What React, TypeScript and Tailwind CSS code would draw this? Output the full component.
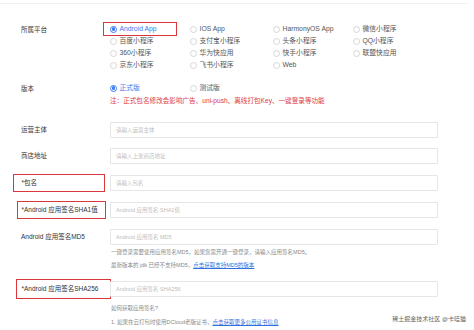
import React from "react";

const FONT = { fontFamily: '"Liberation Sans", "Noto Sans CJK SC", sans-serif' };

function Radio({ checked }: { checked?: boolean }) {
  return checked ? (
    <span className="w-[7px] h-[7px] rounded-full border border-[#3a7bf0] flex items-center justify-center shrink-0 bg-white">
      <span className="w-[3.5px] h-[3.5px] rounded-full bg-[#3a7bf0]" />
    </span>
  ) : (
    <span className="w-[7px] h-[7px] rounded-full border border-[#d6d6d6] shrink-0 bg-white" />
  );
}

function Option({ label, checked, boxed }: { label: string; checked?: boolean; boxed?: boolean }) {
  return (
    <div className="relative flex items-center gap-[2.5px] h-[12px]">
      <Radio checked={checked} />
      <span className={checked ? "text-[#3a7bf0] text-[6.8px] leading-[12px]" : "text-[#555] text-[6.8px] leading-[12px]"}>
        {label}
      </span>
      {boxed && (
        <span className="absolute left-[-7px] top-[-1px] w-[74px] h-[14px] border-[1.5px] border-[#d9363e]" />
      )}
    </div>
  );
}

function Input({ placeholder }: { placeholder: string }) {
  return (
    <div className="w-[328px] h-[16px] border border-[#e6e6e6] rounded-[1px] flex items-center pl-[5px] bg-white">
      <span className="text-[5.5px] text-[#bdbdbd]">{placeholder}</span>
    </div>
  );
}

function Label({ children }: { children: React.ReactNode }) {
  return (
    <div className="w-[110px] shrink-0 pl-[21px] text-[6.5px] text-[#333]">{children}</div>
  );
}

export default function App() {
  const rows = [
    ["Android App", "IOS App", "HarmonyOS App", "微信小程序"],
    ["百度小程序", "支付宝小程序", "头条小程序", "QQ小程序"],
    ["360小程序", "华为快应用", "快手小程序", "联盟快应用"],
    ["京东小程序", "飞书小程序", "Web", ""],
  ];
  return (
    <div className="relative w-[474px] h-[330px] bg-white overflow-hidden" style={FONT}>
      <div className="h-[4px] w-[468px] border-b border-[#f0f0f0]" />

      {/* 所属平台 */}
      <div className="flex items-start mt-[19px]">
        <div className="w-[110px] shrink-0 pl-[21px] text-[6.5px] text-[#333] leading-[14px]">所属平台</div>
        <div className="grid grid-cols-[80px_83px_80px_80px]">
          {rows.map((r, ri) =>
            r.map((o, ci) =>
              o ? (
                <Option key={`${ri}-${ci}`} label={o} checked={ri === 0 && ci === 0} boxed={ri === 0 && ci === 0} />
              ) : (
                <div key={`${ri}-${ci}`} />
              )
            )
          )}
        </div>
      </div>

      {/* 版本 */}
      <div className="flex items-start mt-[11px]">
        <div className="w-[110px] shrink-0 pl-[21px] text-[6.5px] text-[#333] leading-[14px]">版本</div>
        <div className="flex flex-col">
          <div className="grid grid-cols-[80px_83px]">
            <Option label="正式版" checked />
            <Option label="测试版" />
          </div>
          <div className="mt-[1px] text-[6.6px] leading-[12px] text-[#e0393e]">
            注：正式包名修改会影响广告、uni-push、离线打包Key、一键登录等功能
          </div>
        </div>
      </div>

      {/* 运营主体 */}
      <div className="flex items-center mt-[15px]">
        <Label>运营主体</Label>
        <Input placeholder="请输入运营主体" />
      </div>

      <div className="flex items-center mt-[10px]">
        <Label>商店地址</Label>
        <Input placeholder="请输入上架商店地址" />
      </div>

      <div className="flex items-center mt-[10px]">
        <div className="w-[110px] shrink-0 pl-[13px]">
          <div className="w-[92px] h-[18px] border-[1.5px] border-[#d9363e] flex items-center pl-[7.5px] text-[6.5px] text-[#333]">
            *包名
          </div>
        </div>
        <Input placeholder="请输入包名" />
      </div>

      <div className="flex items-center mt-[9px]">
        <div className="w-[110px] shrink-0 pl-[17px]">
          <div className="w-[89px] h-[18px] border-[1.5px] border-[#d9363e] flex items-center pl-[3.5px] text-[6.5px] text-[#333] whitespace-nowrap">
            *Android 应用签名SHA1值
          </div>
        </div>
        <Input placeholder="Android 应用签名 SHA1值" />
      </div>

      <div className="flex items-center mt-[10px]">
        <Label>Android 应用签名MD5</Label>
        <Input placeholder="Android 应用签名 MD5" />
      </div>

      <div className="pl-[111px] text-[5.5px] text-[#888] leading-[13px] mt-[1px]">
        <div>一键登录需要使用应用签名MD5，如果您需开通一键登录，请输入应用签名MD5。</div>
        <div>
          最新版本的 jdk 已经不支持MD5，
          <span className="text-[#2f6fde] underline">点击获取支持MD5的版本</span>
        </div>
      </div>

      <div className="flex items-center mt-[7px]">
        <div className="w-[110px] shrink-0 pl-[16px]">
          <div className="w-[95px] h-[20px] border-[1.5px] border-[#d9363e] flex items-center pl-[4.5px] text-[6.5px] text-[#333] whitespace-nowrap">
            *Android 应用签名SHA256
          </div>
        </div>
        <Input placeholder="Android 应用签名 SHA256" />
      </div>

      <div className="pl-[111px] text-[5.5px] text-[#888] leading-[14px] mt-[2px]">
        <div>如何获取应用签名?</div>
        <div>
          1. 如果在云打包时使用DCloud老版证书，
          <span className="text-[#2f6fde] underline">点击获取更多公用证书信息</span>
        </div>
      </div>

      <div className="absolute right-[8px] top-[314px] text-[6px] leading-[10px] text-[#666] whitespace-nowrap">
        稀土掘金技术社区 @卡哇猫
      </div>
    </div>
  );
}
